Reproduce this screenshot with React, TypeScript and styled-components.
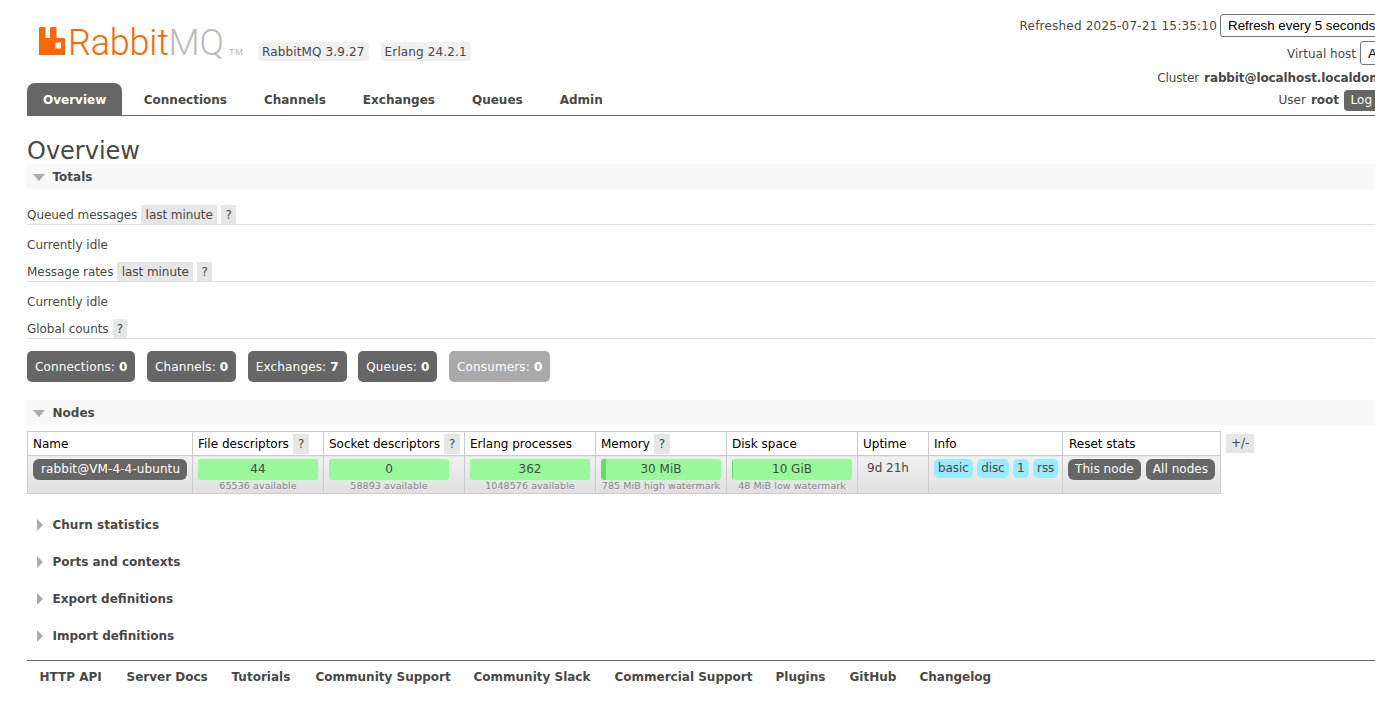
import React from 'react';
import styled, { createGlobalStyle } from 'styled-components';

const Global = createGlobalStyle`
  html, body { margin: 0; padding: 0; background: #fff; overflow: hidden; }
  body { font-family: "DejaVu Sans", Verdana, sans-serif; font-size: 12px; color: #484848; }
`;

const Viewport = styled.div`width: 1375px; height: 709px; overflow: hidden; padding-left: 27px; box-sizing: border-box;`;
const Page = styled.div`width: 1375px;`;

const Header = styled.header`
  height: 116px; box-sizing: border-box; border-bottom: 1px solid #666;
  display: flex; justify-content: space-between;
`;
const HeaderLeft = styled.div`display: flex; flex-direction: column; justify-content: space-between;`;
const Brand = styled.div`display: flex; align-items: flex-start; padding: 26px 0 0 12px;`;
const LogoMark = styled.svg`width: 26px; height: 28px; display: block; flex: none; margin-top: 1px;`;
const LogoWord = styled.div`
  font-family: Roboto, "Liberation Sans", Arial, sans-serif; font-weight: 300; font-size: 36px; line-height: 32px; letter-spacing: -0.2px;
  color: #ff6600; margin: 1px 0 0 3px; white-space: nowrap; width: 157px;
`;
const LogoMq = styled.span`color: #bbb;`;
const LogoTm = styled.div`
  font-family: "Liberation Sans", Arial, sans-serif; font-size: 9.5px; line-height: 10px; color: #bbb;
  margin: 21px 0 0 4px; width: 15px; letter-spacing: 0.3px;
`;
const Versions = styled.div`display: flex; gap: 12px; margin: 16px 0 0 14px;`;
const Version = styled.span`
  background: #f0f0f0; border-radius: 4px; padding: 0 4px; line-height: 21px; height: 19px; letter-spacing: 0.14px;
`;

const Tabs = styled.nav`display: flex; height: 32px;`;
const Tab = styled.a<{ $active?: boolean }>`
  font-weight: bold; line-height: 34px; padding: 0 ${p => (p.$active ? '16px' : '18.5px')};
  margin-right: ${p => (p.$active ? '3px' : '0')};
  color: ${p => (p.$active ? '#fff' : '#484848')};
  background: ${p => (p.$active ? '#666' : 'transparent')};
  border-radius: 8px 8px 0 0;
`;

const Login = styled.div`
  display: flex; flex-direction: column; align-items: flex-end; padding-top: 14px;
`;
const LoginRow = styled.div<{ $h: number; $mt?: number; $gap?: number; $sp?: number }>`
  display: flex; align-items: center; white-space: pre;
  gap: ${p => p.$gap ?? 5}px; height: ${p => p.$h}px; margin-top: ${p => p.$mt ?? 0}px;
  letter-spacing: ${p => p.$sp ?? 0}px;
`;
const HostLabel = styled.span`padding-top: 2px;`;
const Select = styled.div<{ $w: number; $h: number }>`
  font-family: "Liberation Sans", Arial, sans-serif; font-size: 13.33px; color: #000; box-sizing: border-box; letter-spacing: 0;
  height: ${p => p.$h}px; width: ${p => p.$w}px; border: 1px solid #767676; border-radius: 3px; padding: 0 0 0 7px;
  display: flex; align-items: center; background: #fff;
`;
const LogOut = styled.span`
  background: #666; color: #fff; border-radius: 4px; padding: 0 6.5px; line-height: 21px; height: 21px; display: inline-block;
`;

const Title = styled.h1`font-weight: normal; font-size: 24px; line-height: 30px; height: 28px; margin: 20px 0 0; color: #484848;`;

const SectionHead = styled.div<{ $open?: boolean; $mt?: number }>`
  font-weight: bold; height: 25px; box-sizing: border-box; padding-top: 2px; line-height: 23px; display: flex; align-items: center;
  margin-top: ${p => p.$mt ?? 0}px;
  background: ${p => (p.$open ? '#f8f8f8' : 'transparent')};
`;
const Arrow = styled.span<{ $open?: boolean }>`
  width: 25.5px; flex: none; display: flex; box-sizing: border-box;
  padding-left: ${p => (p.$open ? '6px' : '10px')};
  margin-top: ${p => (p.$open ? '0' : '-2px')};
  &::before {
    content: ''; display: block; width: 0; height: 0;
    ${p => p.$open
      ? 'border-left: 6px solid transparent; border-right: 6px solid transparent; border-top: 7px solid #aaa;'
      : 'border-top: 6px solid transparent; border-bottom: 6px solid transparent; border-left: 6px solid #aaa;'}
  }
`;

const Totals = styled.div`padding-top: 16px;`;
const StatLine = styled.div<{ $mt?: number }>`
  display: flex; align-items: stretch; height: 19px; line-height: 21px; gap: 4px; letter-spacing: -0.05px;
  margin-top: ${p => p.$mt ?? 0}px; border-bottom: 1px solid #ddd;
`;
const Tag = styled.span`background: #e6e6e6; padding: 0 4.3px;`;
const Idle = styled.div`line-height: 21px; height: 19px; margin-top: 10px;`;

const Counts = styled.div`display: flex; gap: 11.5px; margin-top: 12px;`;
const Count = styled.div<{ $dim?: boolean }>`
  background: ${p => (p.$dim ? '#aaa' : '#666')}; color: #fff; border-radius: 5px; height: 31px; line-height: 33px; padding: 0 8px;
  letter-spacing: 0.15px; white-space: pre;
  b { font-weight: bold; }
`;

const NodesWrap = styled.div`margin-top: 18px;`;
const TableRow = styled.div`display: flex; align-items: flex-start; margin-top: 6px; gap: 5px;`;
const Table = styled.table`
  border-collapse: collapse; table-layout: fixed; width: 1193px; color: #484848;
  th, td { border: 1px solid #ccc; box-sizing: border-box; padding: 0; }
  th { font-weight: normal; text-align: left; color: #000; height: 24px; padding: 2px 5px 0; white-space: nowrap; background: #fff; line-height: 15px; }
  th:last-child { padding-left: 6px; }
  td { height: 38px; vertical-align: top; padding: 3px 5px 0; background: linear-gradient(#f0f0f0, #e0e0e0); }
`;
const Col = styled.col<{ $w: number }>`width: ${p => p.$w}px;`;
const Help = styled.span`background: #e6e6e6; color: #484848; padding: 3px 5px; margin-left: 4px; line-height: 15px;`;
const NodeName = styled.span`
  display: inline-block; background: #666; color: #fff; border-radius: 6px; height: 21px; line-height: 20px;
  padding: 0 7px 0 8px; white-space: nowrap; letter-spacing: 0.1px;
`;
const Bar = styled.div`
  position: relative; height: 21px; line-height: 21px; background: #99f899; border-radius: 3px; overflow: hidden; width: 120px; color: #484848; text-align: center;
`;
const BarFill = styled.span`position: absolute; left: 0; top: 0; bottom: 0; background: #66dd66;`;
const BarLabel = styled.span`position: relative;`;
const Sub = styled.div`
  font-size: 9.5px; line-height: 12px; color: #888; white-space: nowrap; text-align: center; width: 120px;
  letter-spacing: 0.08px; display: flex; justify-content: center;
`;
const Uptime = styled.div`padding-left: 4px; line-height: 18px;`;
const Pills = styled.div`display: flex; gap: 4.5px;`;
const Pill = styled.span`background: #99ebff; border-radius: 5px; padding: 0 4px; height: 19px; line-height: 18px; letter-spacing: -0.1px;`;
const Buttons = styled.div`display: flex; gap: 5px;`;
const Btn = styled.span`background: #666; color: #fff; border-radius: 6px; height: 21px; line-height: 21px; padding: 0 7px; white-space: nowrap; letter-spacing: 0.05px;`;
const PlusMinus = styled.span`background: #e6e6e6; padding: 0 5px; height: 19px; line-height: 19px; margin-top: 3px; color: #484848;`;

const Closed = styled.div`margin-top: 18px;`;
const Footer = styled.footer`
  border-top: 1px solid #666; margin-top: 12px; display: flex; gap: 24px; padding: 7px 0 0 12.5px; font-weight: bold; line-height: 18px;
`;
const FootLink = styled.a<{ $w: number }>`width: ${p => p.$w}px; white-space: nowrap;`;

type N = { label: string; sub: string; pct?: number };
const bars: N[] = [
  { label: '44', sub: '65536 available' },
  { label: '0', sub: '58893 available' },
  { label: '362', sub: '1048576 available' },
  { label: '30 MiB', sub: '785 MiB high watermark', pct: 4 },
  { label: '10 GiB', sub: '48 MiB low watermark', pct: 1 },
];
const heads: [string, boolean, number][] = [
  ['Name', false, 165], ['File descriptors', true, 131], ['Socket descriptors', true, 141], ['Erlang processes', false, 131],
  ['Memory', true, 131], ['Disk space', false, 131], ['Uptime', false, 71], ['Info', false, 134], ['Reset stats', false, 158],
];
const links: [string, number][] = [
  ['HTTP API', 63], ['Server Docs', 81], ['Tutorials', 60], ['Community Support', 134], ['Community Slack', 117],
  ['Commercial Support', 137], ['Plugins', 50], ['GitHub', 46], ['Changelog', 71],
];

export default function App() {
  return (
    <Viewport>
      <Global />
      <Page>
        <Header>
          <HeaderLeft>
            <Brand>
              <LogoMark viewBox="0 0 26 28">
                <path fill="#ff6600" fillRule="evenodd" d="M0 28V1.2Q0 0 1.2 0h4.1Q6.5 0 6.5 1.2V11h4.5V1.2Q11 0 12.2 0h4.1q1.2 0 1.2 1.2V11h7.3q1.2 0 1.2 1.2V28H0zM16.5 15.5v6h5.5v-6h-5.5z" />
              </LogoMark>
              <LogoWord>Rabbit<LogoMq>MQ</LogoMq></LogoWord>
              <LogoTm>TM</LogoTm>
              <Versions><Version>RabbitMQ 3.9.27</Version><Version>Erlang 24.2.1</Version></Versions>
            </Brand>
            <Tabs>
              <Tab $active>Overview</Tab><Tab>Connections</Tab><Tab>Channels</Tab><Tab>Exchanges</Tab><Tab>Queues</Tab><Tab>Admin</Tab>
            </Tabs>
          </HeaderLeft>
          <Login>
            <LoginRow $h={23} $gap={3} $sp={0.2}>Refreshed 2025-07-21 15:35:10<Select $w={182} $h={23}>Refresh every 5 seconds</Select></LoginRow>
            <LoginRow $h={24} $mt={4} $gap={4}><HostLabel>Virtual host</HostLabel><Select $w={42} $h={24}>All</Select></LoginRow>
            <LoginRow $h={22} $mt={2} $sp={-0.1}>Cluster<b>rabbit@localhost.localdomain</b></LoginRow>
            <LoginRow $h={22}>User<b>root</b><LogOut>Log out</LogOut></LoginRow>
          </Login>
        </Header>
        <Title>Overview</Title>
        <SectionHead $open><Arrow $open />Totals</SectionHead>
        <Totals>
          <StatLine>Queued messages <Tag>last minute</Tag><Tag>?</Tag></StatLine>
          <Idle>Currently idle</Idle>
          <StatLine $mt={8}>Message rates <Tag>last minute</Tag><Tag>?</Tag></StatLine>
          <Idle>Currently idle</Idle>
          <StatLine $mt={8}>Global counts <Tag>?</Tag></StatLine>
          <Counts>
            <Count>Connections: <b>0</b></Count>
            <Count>Channels: <b>0</b></Count>
            <Count>Exchanges: <b>7</b></Count>
            <Count>Queues: <b>0</b></Count>
            <Count $dim>Consumers: <b>0</b></Count>
          </Counts>
        </Totals>
        <NodesWrap>
          <SectionHead $open><Arrow $open />Nodes</SectionHead>
          <TableRow>
            <Table>
              <colgroup>{heads.map(h => <Col key={h[0]} $w={h[2]} />)}</colgroup>
              <thead>
                <tr>{heads.map(h => <th key={h[0]}>{h[0]}{h[1] && <Help>?</Help>}</th>)}</tr>
              </thead>
              <tbody>
                <tr>
                  <td><NodeName>rabbit@VM-4-4-ubuntu</NodeName></td>
                  {bars.map(b => (
                    <td key={b.sub}>
                      <Bar>
                        {b.pct !== undefined && <BarFill style={{ width: `${b.pct}%` }} />}
                        <BarLabel>{b.label}</BarLabel>
                      </Bar>
                      <Sub>{b.sub}</Sub>
                    </td>
                  ))}
                  <td><Uptime>9d 21h</Uptime></td>
                  <td><Pills><Pill>basic</Pill><Pill>disc</Pill><Pill>1</Pill><Pill>rss</Pill></Pills></td>
                  <td><Buttons><Btn>This node</Btn><Btn>All nodes</Btn></Buttons></td>
                </tr>
              </tbody>
            </Table>
            <PlusMinus>+/-</PlusMinus>
          </TableRow>
        </NodesWrap>
        <Closed>
          <SectionHead><Arrow />Churn statistics</SectionHead>
          <SectionHead $mt={12}><Arrow />Ports and contexts</SectionHead>
          <SectionHead $mt={12}><Arrow />Export definitions</SectionHead>
          <SectionHead $mt={12}><Arrow />Import definitions</SectionHead>
        </Closed>
        <Footer>
          {links.map(l => <FootLink key={l[0]} $w={l[1]}>{l[0]}</FootLink>)}
        </Footer>
      </Page>
    </Viewport>
  );
}
